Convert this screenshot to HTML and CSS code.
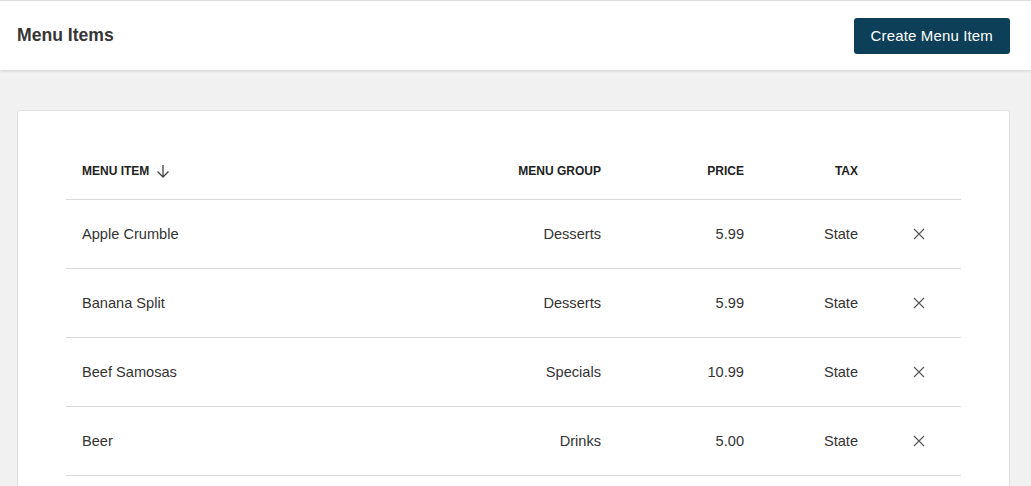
FILE: index.html
```html
<!DOCTYPE html>
<html lang="en">
<head>
<meta charset="utf-8">
<title>Menu Items</title>
<link rel="stylesheet" href="styles.css">
</head>
<body>
<header class="topbar">
  <h1 class="title">Menu Items</h1>
  <button class="btn-primary" type="button">Create Menu Item</button>
</header>
<main class="content">
  <section class="card">
    <div class="table">
      <div class="row head">
        <div class="cell left">Menu Item
          <svg class="sort" width="14" height="14" viewBox="0 0 14 14" aria-hidden="true"><path d="M7 1v12M1.5 7.5L7 13l5.5-5.5" fill="none" stroke="#444" stroke-width="1.3"/></svg>
        </div>
        <div class="cell right">Menu Group</div>
        <div class="cell right">Price</div>
        <div class="cell right">Tax</div>
        <div class="cell center"></div>
      </div>
      <div class="row">
        <div class="cell left">Apple Crumble</div>
        <div class="cell right">Desserts</div>
        <div class="cell right">5.99</div>
        <div class="cell right">State</div>
        <div class="cell center"><svg class="x" width="12" height="12" viewBox="0 0 12 12"><path d="M1 1l10 10M11 1L1 11" stroke="#555" stroke-width="1.1"/></svg></div>
      </div>
      <div class="row">
        <div class="cell left">Banana Split</div>
        <div class="cell right">Desserts</div>
        <div class="cell right">5.99</div>
        <div class="cell right">State</div>
        <div class="cell center"><svg class="x" width="12" height="12" viewBox="0 0 12 12"><path d="M1 1l10 10M11 1L1 11" stroke="#555" stroke-width="1.1"/></svg></div>
      </div>
      <div class="row">
        <div class="cell left">Beef Samosas</div>
        <div class="cell right">Specials</div>
        <div class="cell right">10.99</div>
        <div class="cell right">State</div>
        <div class="cell center"><svg class="x" width="12" height="12" viewBox="0 0 12 12"><path d="M1 1l10 10M11 1L1 11" stroke="#555" stroke-width="1.1"/></svg></div>
      </div>
      <div class="row">
        <div class="cell left">Beer</div>
        <div class="cell right">Drinks</div>
        <div class="cell right">5.00</div>
        <div class="cell right">State</div>
        <div class="cell center"><svg class="x" width="12" height="12" viewBox="0 0 12 12"><path d="M1 1l10 10M11 1L1 11" stroke="#555" stroke-width="1.1"/></svg></div>
      </div>
    </div>
  </section>
</main>
</body>
</html>
```
FILE: styles.css
```css
html, body {
  margin: 0;
  padding: 0;
}
body {
  background: #f1f1f1;
  font-family: "Liberation Sans", Arial, sans-serif;
  color: #333;
  height: 486px;
  overflow: hidden;
}
.topbar {
  box-sizing: border-box;
  height: 70px;
  background: #fff;
  border-top: 1px solid #dcdcdc;
  box-shadow: 0 1px 3px rgba(0, 0, 0, 0.14);
  display: flex;
  align-items: center;
  justify-content: space-between;
  padding: 0 21px 0 17px;
  position: relative;
}
.title {
  margin: 0;
  font-size: 17.6px;
  font-weight: 700;
  color: #363636;
}
.btn-primary {
  font-family: inherit;
  background: #0d4058;
  color: #fff;
  border: 0;
  border-radius: 3px;
  height: 36px;
  padding: 0 17px 0 17px;
  font-size: 15px;
  letter-spacing: 0.15px;
  cursor: pointer;
}
.content {
  padding: 40px 21px 0 17px;
}
.card {
  background: #fff;
  border: 1px solid #e2e2e2;
  border-radius: 3px;
  padding: 32px 48px 48px 48px;
}
.row {
  display: grid;
  grid-template-columns: 1fr 200px 143px 114px 87px;
  height: 69px;
  padding-bottom: 1px;
  border-bottom: 1px solid #dadada;
  box-sizing: border-box;
  align-items: center;
  font-size: 14.6px;
  color: #333;
}
.row.head {
  height: 57px;
  padding-bottom: 0;
  font-size: 12px;
  font-weight: 700;
  text-transform: uppercase;
  color: #222;
}
.cell {
  padding: 0 16px;
}
.cell.left {
  text-align: left;
  display: flex;
  align-items: center;
  gap: 7px;
}
.cell.right {
  text-align: right;
}
.cell.center {
  display: flex;
  justify-content: center;
  padding: 0 0 0 2px;
}
.sort {
  display: block;
}
.x {
  display: block;
}
```
